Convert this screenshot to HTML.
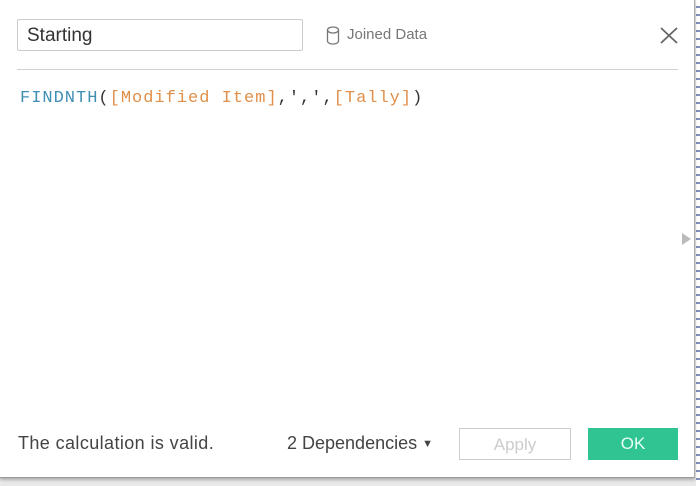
<!DOCTYPE html>
<html><head><style>
body{margin:0;width:700px;height:486px;background:#e9e9e9;position:relative;overflow:hidden;font-family:"Liberation Sans",sans-serif;}
.dlg{position:absolute;left:0;top:0;width:694px;height:477px;background:#fff;border-right:1px solid #aaa;border-bottom:1px solid #999;box-shadow:0 2px 3px rgba(0,0,0,.25);}
.edge{position:absolute;left:696px;top:0;width:4px;height:486px;background:repeating-linear-gradient(#fff 0 6px,#8090b8 6px 8px);}
.inp{position:absolute;left:17px;top:19px;font-size:19px;color:#333;line-height:31px;padding-left:9px;box-sizing:border-box;width:286px;height:32px;border:1px solid #ccc;border-radius:2px}
.src{position:absolute;left:347px;top:26px;font-size:15px;color:#777;}
.sep{position:absolute;left:17px;top:69px;width:661px;height:1px;background:#d0d0d0;}
.code{position:absolute;left:20px;top:89px;font-family:"Liberation Mono",monospace;font-size:17px;letter-spacing:1px;color:#333;}
.b{position:absolute;top:428px;height:32px;line-height:32px;text-align:center;font-size:17px;box-sizing:border-box}
</style></head><body>
<div class="edge"></div>
<div class="dlg">
<div class="inp">Starting</div>
<svg style="position:absolute;left:326px;top:26px" width="14" height="19" viewBox="0 0 14 19"><ellipse cx="7" cy="4" rx="5.5" ry="3" fill="none" stroke="#777" stroke-width="1.3"/><path d="M1.5 4v11c0 1.7 2.5 3 5.5 3s5.5-1.3 5.5-3V4" fill="none" stroke="#777" stroke-width="1.3"/></svg>
<div class="src">Joined Data</div>
<svg style="position:absolute;left:660px;top:27px" width="18" height="17"><path d="M1 1L17 16M17 1L1 16" stroke="#666" stroke-width="1.8"/></svg>
<div class="sep"></div>
<div class="code"><span style="color:#3f8fb5">FINDNTH</span>(<span style="color:#e0904a">[Modified Item]</span>,',',<span style="color:#e0904a">[Tally]</span>)</div>
<svg style="position:absolute;left:682px;top:233px" width="10" height="12"><path d="M0 0L9 6L0 12Z" fill="#bbb"/></svg>
<div style="position:absolute;left:18px;top:433px;font-size:18px;color:#444;letter-spacing:0.4px">The calculation is valid.</div>
<div style="position:absolute;left:287px;top:433px;font-size:18px;color:#444">2 Dependencies <span style="font-size:11px;position:relative;top:-2px">▼</span></div>
<div class="b" style="left:459px;width:112px;border:1px solid #ccc;color:#ccc">Apply</div>
<div class="b" style="left:588px;width:90px;background:#2fc492;color:#e8fff5">OK</div>
</div>
</body></html>
